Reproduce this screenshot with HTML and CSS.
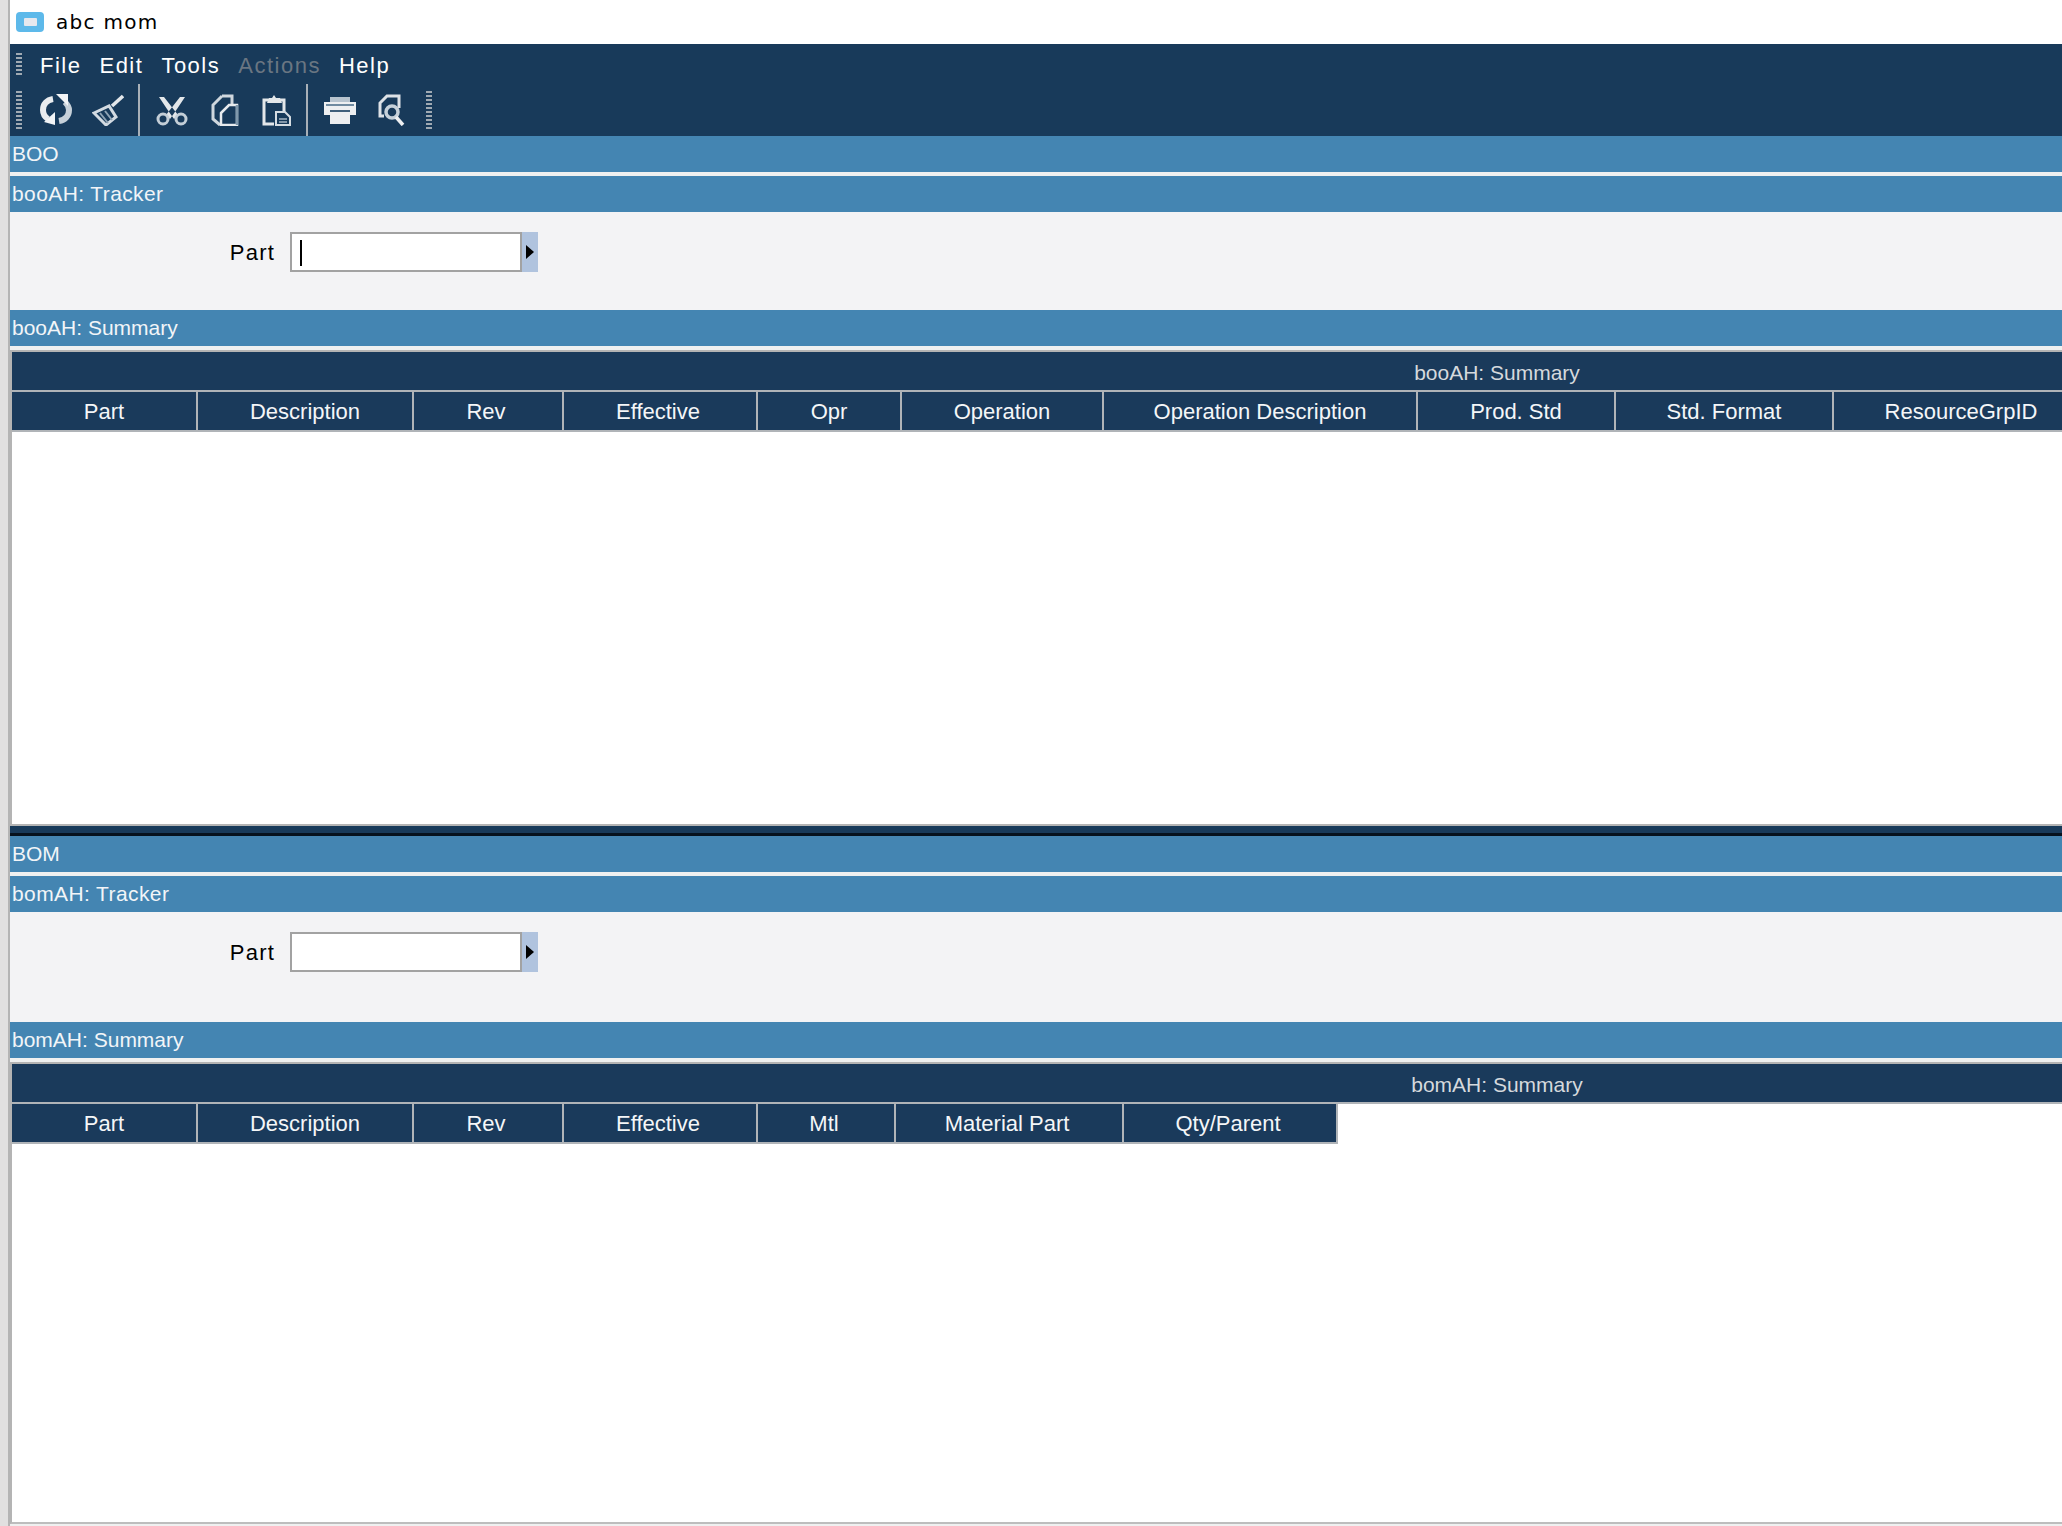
FILE: index.html
```html
<!DOCTYPE html>
<html lang="en">
<head>
<meta charset="utf-8">
<title>abc mom</title>
<link rel="stylesheet" href="styles.css">
</head>
<body>
<div class="edge"></div>
<div class="app">
  <header class="titlebar">
    <svg class="app-icon" viewBox="0 0 28 20"><rect x="0" y="0" width="28" height="20" rx="4" fill="#5db9ea"/><rect x="8" y="6" width="13" height="8" rx="1" fill="#e6e8ee"/></svg>
    <span class="app-name">abc mom</span>
  </header>
  <div class="chrome">
    <nav class="menubar">
      <span class="grip grip-menu"></span>
      <span class="menu-item">File</span>
      <span class="menu-item">Edit</span>
      <span class="menu-item">Tools</span>
      <span class="menu-item disabled">Actions</span>
      <span class="menu-item">Help</span>
    </nav>
    <div class="toolbar">
      <span class="grip grip-tool"></span>
      <div class="tool-group">
        <svg class="tool" viewBox="0 0 32 32"><path d="M13 5C7 6 3 10 3 16c0 4 2 7 5 9" fill="none" stroke="#e9ecef" stroke-width="6"/><path d="M4 28l11 3V18z" fill="#f2f4f6"/><path d="M19 27c6-1 10-5 10-11 0-4-2-6-4-8" fill="none" stroke="#c6d0d9" stroke-width="6"/><path d="M16 0h12v12z" fill="#f2f4f6"/></svg>
        <svg class="tool" viewBox="0 0 32 32"><path d="M31 2L20 12" stroke="#e3e7eb" stroke-width="3.5" fill="none"/><path d="M2 19l15-7 7 11-10 8z" fill="none" stroke="#d3dbe2" stroke-width="3"/><path d="M8 19l8 10M13 17l7 9" stroke="#8fa3b4" stroke-width="2" fill="none"/></svg>
      </div>
      <span class="sep"></span>
      <div class="tool-group">
        <svg class="tool" viewBox="0 0 32 32"><path d="M3 3h5l14 18-4 4-7-10zM29 3h-5L10 21l4 4 7-10z" fill="#e3e7ea"/><circle cx="7" cy="25" r="5" fill="none" stroke="#c3ced7" stroke-width="3"/><circle cx="25" cy="25" r="5" fill="none" stroke="#c3ced7" stroke-width="3"/></svg>
        <svg class="tool" viewBox="0 0 32 32"><path d="M14 2h10v9M14 2L5 11v14l7 6" fill="none" stroke="#cfd7de" stroke-width="3"/><path d="M13 19l8-8h8v20H13z" fill="#183a5a" stroke="#e8ebee" stroke-width="2.5"/><path d="M29 11v20" stroke="#7f98ac" stroke-width="2.5"/></svg>
        <svg class="tool" viewBox="0 0 32 32"><path d="M14 30H4V6h20v11" fill="none" stroke="#e3e7ea" stroke-width="3"/><path d="M9 4h3l2-3 2 3h4l2 5H7z" fill="#e3e7ea"/><path d="M16 31V18h9l5 5v8z" fill="#183a5a" stroke="#d5dce2" stroke-width="2"/><path d="M19 25h8M19 28h8" stroke="#a6b6c4" stroke-width="1.5"/></svg>
      </div>
      <span class="sep"></span>
      <div class="tool-group">
        <svg class="tool" viewBox="0 0 32 32"><rect x="6" y="3" width="20" height="5" fill="#b7c4cf"/><rect x="0" y="8" width="32" height="13" fill="#edeff1"/><rect x="2" y="10" width="28" height="2" fill="#6f8aa0"/><rect x="6" y="16" width="20" height="2" fill="#3f5f7b"/><rect x="6" y="18" width="20" height="12" fill="#edeff1"/></svg>
        <svg class="tool" viewBox="0 0 32 32"><path d="M8 22H4V9l7-7h12v12" fill="none" stroke="#dde2e7" stroke-width="3"/><circle cx="16" cy="18" r="6" fill="none" stroke="#c6d1da" stroke-width="3.5"/><path d="M20 23l7 8" stroke="#eef0f2" stroke-width="3.5"/></svg>
      </div>
      <span class="grip grip-tool grip-end"></span>
    </div>
  </div>

  <main class="workspace">
    <section class="pane pane-boo">
      <h2 class="bar">BOO</h2>
      <h3 class="bar bar-tracker">booAH: Tracker</h3>
      <div class="tracker tracker-boo">
        <label class="field-label">Part</label>
        <div class="field"><div class="input"><span class="caret"></span></div><div class="spin"><span class="arrow"></span></div></div>
      </div>
      <h3 class="bar">booAH: Summary</h3>
      <div class="grid-wrap grid-boo">
        <div class="grid-title">booAH: Summary</div>
        <div class="grid-head cols-boo">
          <span>Part</span><span>Description</span><span class="nudge">Rev</span><span class="nudge">Effective</span><span>Opr</span><span>Operation</span><span>Operation Description</span><span>Prod. Std</span><span>Std. Format</span><span>ResourceGrpID</span>
        </div>
      </div>
    </section>
    <div class="splitter"></div>
    <section class="pane pane-bom">
      <h2 class="bar">BOM</h2>
      <h3 class="bar bar-tracker">bomAH: Tracker</h3>
      <div class="tracker tracker-bom">
        <label class="field-label">Part</label>
        <div class="field"><div class="input"></div><div class="spin"><span class="arrow"></span></div></div>
      </div>
      <h3 class="bar">bomAH: Summary</h3>
      <div class="grid-wrap grid-bom">
        <div class="grid-title">bomAH: Summary</div>
        <div class="grid-head cols-bom">
          <span>Part</span><span>Description</span><span class="nudge">Rev</span><span class="nudge">Effective</span><span class="nudge">Mtl</span><span class="nudge">Material Part</span><span class="nudge">Qty/Parent</span>
        </div>
      </div>
    </section>
  </main>
</div>
</body>
</html>
```
FILE: styles.css
```css
* { box-sizing: border-box; }
html, body { margin: 0; height: 100%; overflow: hidden; }
body {
  display: flex;
  background: #fff;
  font-family: "Liberation Sans", Arial, sans-serif;
  font-size: 22px;
}
.edge { flex: 0 0 8px; background: #e1e0e0; }
.app {
  flex: 1;
  min-width: 0;
  height: 1526px;
  display: flex;
  flex-direction: column;
  border-left: 2px solid #b4b4b4;
  overflow: hidden;
}
.titlebar {
  flex: 0 0 44px;
  display: flex;
  align-items: center;
  padding-left: 6px;
  background: #fff;
}
.app-icon { width: 28px; height: 20px; margin-right: 12px; }
.app-name {
  font-family: "DejaVu Sans", sans-serif;
  font-size: 20px;
  letter-spacing: 1.3px;
  color: #000;
}
.chrome { background: #183a5a; }
.menubar {
  height: 40px;
  display: flex;
  align-items: center;
  gap: 18px;
  padding-left: 6px;
}
.menu-item { color: #fff; letter-spacing: 1.5px; line-height: 1; padding-top: 3px; }
.menu-item.disabled { color: #6a7682; }
.grip {
  flex: 0 0 6px;
  width: 6px;
  background: repeating-linear-gradient(to bottom, #a0aab3 0 2.5px, transparent 2.5px 4px);
}
.grip-menu { height: 22px; }
.toolbar {
  height: 52px;
  display: flex;
  align-items: center;
  padding-left: 6px;
}
.grip-tool { height: 38px; margin-right: 18px; }
.grip-end { margin-left: 18px; margin-right: 0; }
.tool-group { display: flex; gap: 20px; }
.tool { width: 32px; height: 32px; display: block; }
.sep {
  width: 2px;
  height: 52px;
  margin: 0 16px 0 14px;
  background: #a8b0b8;
}
.workspace { flex: 1; display: flex; flex-direction: column; min-height: 0; background: #fff; }
.pane { display: flex; flex-direction: column; background: #eff0f0; }
.pane-bom { flex: 1; min-height: 0; }
.bar {
  margin: 0;
  height: 36px;
  display: flex;
  align-items: center;
  padding-left: 2px;
  background: #4485b2;
  color: #f2f5f8;
  font-size: 21px;
  font-weight: normal;
}
.bar-tracker { margin-top: 4px; letter-spacing: .4px; }
.tracker {
  display: flex;
  align-items: flex-start;
  padding-top: 20px;
  background: #f3f3f5;
}
.tracker-boo { height: 98px; }
.tracker-bom { height: 110px; }
.field-label {
  width: 265px;
  height: 40px;
  line-height: 42px;
  margin-right: 15px;
  text-align: right;
  letter-spacing: 1.2px;
  color: #000;
}
.field { display: flex; height: 40px; }
.input {
  position: relative;
  z-index: 1;
  width: 232px;
  height: 40px;
  padding: 8px;
  background: #fff;
  border: 2px solid #a2a2a2;
}
.caret { display: block; width: 2px; height: 26px; margin-top: -2px; background: #000; }
.spin {
  width: 20px;
  margin-left: -4px;
  display: flex;
  align-items: center;
  justify-content: flex-end;
  padding-right: 4px;
  background: #b0c3de;
}
.arrow {
  width: 0;
  height: 0;
  border-left: 8px solid #000;
  border-top: 7px solid transparent;
  border-bottom: 7px solid transparent;
}
.grid-wrap {
  margin-top: 4px;
  border-top: 2px solid #b4b4b4;
  border-left: 2px solid #b4b4b4;
  background: #fff;
}
.grid-boo { height: 474px; }
.grid-bom { flex: 1; border-bottom: 2px solid #bdbdbd; margin-bottom: 2px; }
.grid-title {
  width: 2970px;
  height: 40px;
  display: flex;
  align-items: center;
  justify-content: center;
  padding-top: 3px;
  background: #1a3a5b;
  border-bottom: 2px solid #b0b4b8;
  color: #d5d9dd;
  font-size: 21px;
}
.grid-head {
  display: grid;
  width: max-content;
  height: 40px;
  border-bottom: 2px solid #b0b4b8;
}
.grid-head span {
  display: flex;
  align-items: center;
  justify-content: center;
  padding-top: 2px;
  background: #1a3a5b;
  border-right: 2px solid #b0b4b8;
  color: #f4f6f8;
}
.grid-head .nudge { padding-right: 4px; }
.cols-boo { grid-template-columns: 186px 216px 150px 194px 144px 202px 314px 198px 218px 256px; }
.cols-bom { grid-template-columns: 186px 216px 150px 194px 138px 228px 214px; }
.splitter {
  flex: 0 0 12px;
  background: #183a5a;
  border-top: 2px solid #b4b4b4;
  border-bottom: 3px solid #06121e;
}
```
